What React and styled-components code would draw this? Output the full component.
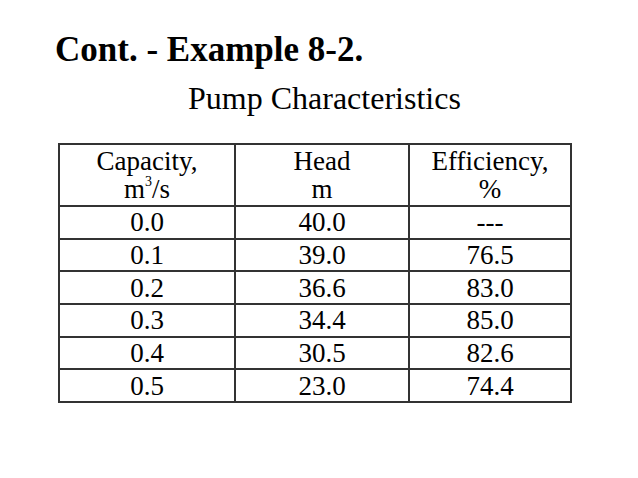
import React from 'react';
import styled, { createGlobalStyle } from 'styled-components';

const GlobalStyle = createGlobalStyle`
    body {
        margin: 0;
        background: #fff;
        font-family: "Liberation Serif", "Times New Roman", serif;
        color: #000;
    }
`;

const filas = [
    ['0.0', '40.0', '---'],
    ['0.1', '39.0', '76.5'],
    ['0.2', '36.6', '83.0'],
    ['0.3', '34.4', '85.0'],
    ['0.4', '30.5', '82.6'],
    ['0.5', '23.0', '74.4'],
];

export default function App() {
    return (
        <>
            <GlobalStyle />
            <Diapositiva>
                <Titulo>Cont. - Example 8-2.</Titulo>
                <Subtitulo>Pump Characteristics</Subtitulo>
                <Tabla>
                    <colgroup>
                        <col style={{ width: '176px' }} />
                        <col style={{ width: '174px' }} />
                        <col />
                    </colgroup>
                    <thead>
                        <tr>
                            <Encabezado>Capacity,<br />m<Exponente>3</Exponente>/s</Encabezado>
                            <Encabezado>Head<br />m</Encabezado>
                            <Encabezado>Efficiency,<br />%</Encabezado>
                        </tr>
                    </thead>
                    <tbody>
                        {filas.map((fila) => (
                            <tr key={fila[0]}>
                                {fila.map((valor, i) => (
                                    <Celda key={i}>{valor}</Celda>
                                ))}
                            </tr>
                        ))}
                    </tbody>
                </Tabla>
            </Diapositiva>
        </>
    );
}

const Diapositiva = styled.div`
    width: 638px;
    height: 478px;
    display: flex;
    flex-direction: column;
    align-items: flex-start;
    padding: 30px 0 0 55px;
    box-sizing: border-box;
`;

const Titulo = styled.h1`
    margin: 0;
    font-size: 35px;
    font-weight: bold;
    line-height: 40px;
`;

const Subtitulo = styled.h2`
    margin: 10px 0 0 133px;
    font-size: 32px;
    font-weight: normal;
    line-height: 36px;
`;

const Tabla = styled.table`
    margin: 27px 0 0 3px;
    width: 514px;
    border-collapse: collapse;
    table-layout: fixed;
    font-size: 27px;
`;

const Encabezado = styled.th`
    border: 2px solid #333;
    font-weight: normal;
    height: 60px;
    padding: 0;
    line-height: 28px;
    vertical-align: middle;
`;

const Exponente = styled.span`
    display: inline-block;
    font-size: 14px;
    line-height: 10px;
    vertical-align: 12px;
`;

const Celda = styled.td`
    border: 2px solid #333;
    height: 30.7px;
    padding: 0;
    text-align: center;
    line-height: 28px;
`;
